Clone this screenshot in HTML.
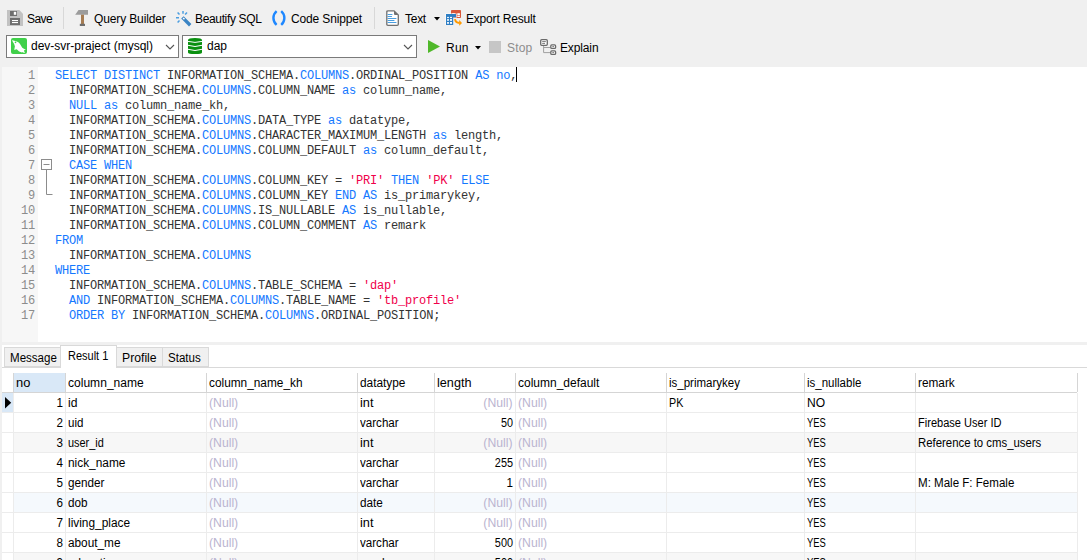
<!DOCTYPE html>
<html><head><meta charset="utf-8">
<style>
html,body{margin:0;padding:0}
body{width:1087px;height:560px;overflow:hidden;background:#f0f0f0;position:relative;font-family:"Liberation Sans",sans-serif;font-size:11.5px;color:#000}
.a{position:absolute}
.t{position:absolute;white-space:nowrap;line-height:16px;font-size:12px}
svg{position:absolute;overflow:visible}
.sep{position:absolute;width:1px;background:#d8d8d8}
.combo{position:absolute;border:1px solid #7a7a7a;background:#fff;box-sizing:border-box}
#ed{position:absolute;left:2px;top:67px;width:1085px;height:275px;background:#fff;overflow:hidden}
#gut{position:absolute;left:0;top:0;width:36px;height:275px;background:#f7f7f7}
.ln{position:absolute;right:0;width:1085px;font-family:"Liberation Mono",monospace;font-size:12px;letter-spacing:-0.2px;line-height:15px;white-space:pre;color:#333}
.num{position:absolute;left:0;width:33px;text-align:right;font-family:"Liberation Mono",monospace;font-size:12px;letter-spacing:-0.2px;line-height:15px;color:#8c8c8c}
.k{color:#1478ff}
.s{color:#f0004a}
#res{position:absolute;left:2px;top:345px;width:1085px;height:215px;background:#fff}
.tab{position:absolute;top:2px;height:20px;box-sizing:border-box;border:1px solid #d9d9d9;background:#f0f0f0}
.tab.act{top:0;height:23px;background:#fff;border-bottom:none}
.hl{position:absolute;height:1px;background:#ececec}
.vl{position:absolute;width:1px;background:#ececec}
.c{position:absolute;white-space:nowrap;line-height:16px;font-size:12px;transform-origin:left}
.n{color:#bab4d0}
.r{text-align:right}
</style></head><body>

<!-- toolbar row 1 -->
<svg style="left:7px;top:10px" width="16" height="16" viewBox="0 0 16 16">
  <path d="M0 0H12.3L16 3.8V16H0Z" fill="#c2c2c2"/>
  <rect x="3" y="1" width="7" height="5" fill="#6f6f6f"/>
  <rect x="6.8" y="1.8" width="2.4" height="3" fill="#fff"/>
  <rect x="3" y="8" width="10" height="7" fill="#6f6f6f"/>
  <rect x="5" y="10" width="6" height="1.1" fill="#fff"/>
  <rect x="5" y="12" width="6" height="1.1" fill="#fff"/>
</svg>
<div class="t" style="left:27px;top:11px;letter-spacing:-0.6px">Save</div>
<div class="sep" style="left:63px;top:7px;height:22px"></div>

<svg style="left:72px;top:10px" width="16" height="16" viewBox="0 0 16 16">
  <path d="M3.2 4.7L6.5 0H16V4.7Z" fill="#9c9c9c"/>
  <rect x="9" y="4.7" width="3" height="9.3" fill="#a67c52"/>
  <rect x="7.8" y="13.8" width="5.2" height="2.2" fill="#6f6f6f"/>
</svg>
<div class="t" style="left:94px;top:11px;letter-spacing:-0.13px">Query Builder</div>

<svg style="left:176px;top:10px" width="16" height="16" viewBox="0 0 16 16">
  <path d="M5.2 8.6L7.6 6.2L15.4 14L13 16.4Z" fill="#3a84c4"/>
  <path d="M6.6 8.4L7.6 7.4L9 8.8L8 9.8Z" fill="#fff"/>
  <path d="M7 1V3.8M0 7.8H3M1.6 2.5L3.5 4.6M11 2.5L9.1 4.6M1.6 12.6L3.5 10.6" stroke="#4c9ee0" stroke-width="1.5"/>
</svg>
<div class="t" style="left:195px;top:11px;letter-spacing:-0.35px">Beautify SQL</div>

<svg style="left:271px;top:10px" width="16" height="16" viewBox="0 0 16 16">
  <path d="M5.6 1.1A9.1 9.1 0 0 0 5.6 14.9" fill="none" stroke="#1e88ff" stroke-width="2.4"/>
  <path d="M10.2 1.1A9.1 9.1 0 0 1 10.2 14.9" fill="none" stroke="#1e88ff" stroke-width="2.4"/>
</svg>
<div class="t" style="left:291px;top:11px;letter-spacing:-0.14px">Code Snippet</div>
<div class="sep" style="left:374px;top:7px;height:22px"></div>

<svg style="left:385px;top:10px" width="16" height="16" viewBox="0 0 16 16">
  <path d="M2.4 0.8H9L13.3 5.1V14.2Q13.3 15.3 12.2 15.3H2.9Q1.8 15.3 1.8 14.2V1.9Q1.8 0.8 2.9 0.8Z" fill="#fff" stroke="#707070" stroke-width="1.3"/>
  <path d="M9 0.8V4Q9 5.1 10.1 5.1H13.3Z" fill="#707070"/>
  <path d="M3 4.5H7M3 6.5H6.5M3 8.5H11M3 10.5H9M3 12.5H11" stroke="#4a9ee0" stroke-width="1.1" stroke-linecap="round"/>
</svg>
<div class="t" style="left:405px;top:11px;letter-spacing:-0.27px">Text</div>
<svg style="left:434px;top:17px" width="6" height="4" viewBox="0 0 6 4"><path d="M0 0H6L3 3.5Z" fill="#000"/></svg>

<svg style="left:446px;top:10px" width="16" height="16" viewBox="0 0 16 16">
  <rect x="5" y="0" width="10" height="8" rx="0.8" fill="#d9573a"/>
  <rect x="6.2" y="3.2" width="2.6" height="2.2" fill="#fff"/>
  <rect x="11.3" y="3.2" width="2.6" height="2.2" fill="#fff"/>
  <rect x="11.3" y="6" width="2.6" height="1" fill="#fff"/>
  <path d="M-0.6 3.4H10.6V7.8H7.8V8.5H7.2V7.2H10V4H0V15H-0.6Z" fill="#fff"/>
  <path d="M0 4H10V7.2H7.2V15H0Z" fill="#2f7fc4"/>
  <rect x="1.1" y="6.9" width="1.8" height="1.2" fill="#fff"/>
  <rect x="4" y="6.9" width="2" height="1.2" fill="#fff"/>
  <rect x="1.1" y="9.1" width="1.8" height="1.7" fill="#fff"/>
  <rect x="4" y="9.1" width="2" height="1.7" fill="#fff"/>
  <rect x="1.1" y="12" width="1.8" height="1.8" fill="#fff"/>
  <rect x="4" y="12" width="2" height="1.8" fill="#fff"/>
  <path d="M9 9.2Q9.5 12.8 13.6 13" fill="none" stroke="#ff9a00" stroke-width="2"/>
  <path d="M13.2 10L16 13L13.2 15.8Z" fill="#ff9a00"/>
</svg>
<div class="t" style="left:466px;top:11px;letter-spacing:-0.19px">Export Result</div>

<!-- toolbar row 2 -->
<div class="combo" style="left:6px;top:35px;width:173px;height:23px"></div>
<svg style="left:11px;top:38px" width="16" height="16" viewBox="0 0 16 16">
  <rect x="0" y="0" width="16" height="16" rx="2" fill="#40d04a"/>
  <path d="M0.9 2.3C2.5 2.3 5.5 3.2 7.7 4.6C9 5.6 10 8 11.3 9.8C12.2 10.7 13.5 11.2 14.9 11.4L12.9 12.5L13.9 14.9C12.5 14.9 11 14.5 8.8 13.7C7.5 13 6.5 11.8 5.6 11.2L3.2 11.9L3.9 8.6C3.7 7.5 3.3 6 2.4 4.8Z" fill="#fff"/>
  <circle cx="4.5" cy="4.4" r="0.8" fill="#40d04a"/>
</svg>
<div class="t" style="left:31px;top:38px">dev-svr-praject (mysql)</div>
<svg style="left:166px;top:45px" width="8" height="5" viewBox="0 0 8 5"><path d="M0 0L4 4L8 0" fill="none" stroke="#555" stroke-width="1.1"/></svg>

<div class="combo" style="left:182px;top:35px;width:235px;height:23px"></div>
<svg style="left:188px;top:38px" width="14" height="16" viewBox="0 0 14 16">
  <path d="M0 2Q0 0 7 0Q14 0 14 2V14.5Q14 16 7 16Q0 16 0 14.5Z" fill="#0a9010"/>
  <path d="M0 3.4Q7 5.4 14 3.4M0 7.3Q7 9.7 14 7.3M0 11.3Q7 13.7 14 11.3" fill="none" stroke="#fff" stroke-width="1"/>
</svg>
<div class="t" style="left:207px;top:38px">dap</div>
<svg style="left:404px;top:45px" width="8" height="5" viewBox="0 0 8 5"><path d="M0 0L4 4L8 0" fill="none" stroke="#555" stroke-width="1.1"/></svg>

<svg style="left:428px;top:40px" width="12" height="13" viewBox="0 0 12 13"><path d="M0 0L12 6.5L0 13Z" fill="#4fb82a"/></svg>
<div class="t" style="left:446px;top:40px;letter-spacing:0.25px">Run</div>
<svg style="left:475px;top:46px" width="6" height="4" viewBox="0 0 6 4"><path d="M0 0H6L3 3.5Z" fill="#000"/></svg>
<div class="a" style="left:489px;top:41px;width:12px;height:12px;background:#c6c6c6"></div>
<div class="t" style="left:507px;top:40px;color:#8d8d8d;letter-spacing:0.2px">Stop</div>
<svg style="left:540px;top:39px" width="17" height="16" viewBox="0 0 17 16">
  <path d="M3.6 6.8V13.6H10.5M3.6 8.5H10.5" fill="none" stroke="#a0a0a0" stroke-width="1"/>
  <rect x="0.7" y="0.7" width="6.6" height="5.6" rx="1" fill="#fff" stroke="#6a6a6a" stroke-width="1.3"/>
  <path d="M2.2 2.6H5.8M2.2 4.4H5" stroke="#6a6a6a" stroke-width="0.9"/>
  <rect x="10.8" y="5.9" width="4.8" height="3.5" rx="1" fill="#fff" stroke="#6a6a6a" stroke-width="1.3"/>
  <rect x="10.8" y="11.9" width="4.8" height="3.5" rx="1" fill="#fff" stroke="#6a6a6a" stroke-width="1.3"/>
  <path d="M12.3 7.6H14.1M12.3 13.6H14.1" stroke="#6a6a6a" stroke-width="0.9"/>
</svg>
<div class="t" style="left:560px;top:40px;letter-spacing:-0.13px">Explain</div>

<!-- editor -->
<div id="ed">
  <div id="gut"></div>
  <div class="num" style="top:2px">1</div>
  <div class="ln" style="left:53px;top:2px"><span class="k">SELECT</span> <span class="k">DISTINCT</span> INFORMATION_SCHEMA.<span class="k">COLUMNS</span>.ORDINAL_POSITION <span class="k">AS</span> <span class="k">no</span>,</div>
  <div class="num" style="top:17px">2</div>
  <div class="ln" style="left:53px;top:17px">  INFORMATION_SCHEMA.<span class="k">COLUMNS</span>.COLUMN_NAME <span class="k">as</span> column_name,</div>
  <div class="num" style="top:32px">3</div>
  <div class="ln" style="left:53px;top:32px">  <span class="k">NULL</span> <span class="k">as</span> column_name_kh,</div>
  <div class="num" style="top:47px">4</div>
  <div class="ln" style="left:53px;top:47px">  INFORMATION_SCHEMA.<span class="k">COLUMNS</span>.DATA_TYPE <span class="k">as</span> datatype,</div>
  <div class="num" style="top:62px">5</div>
  <div class="ln" style="left:53px;top:62px">  INFORMATION_SCHEMA.<span class="k">COLUMNS</span>.CHARACTER_MAXIMUM_LENGTH <span class="k">as</span> length,</div>
  <div class="num" style="top:77px">6</div>
  <div class="ln" style="left:53px;top:77px">  INFORMATION_SCHEMA.<span class="k">COLUMNS</span>.COLUMN_DEFAULT <span class="k">as</span> column_default,</div>
  <div class="num" style="top:92px">7</div>
  <div class="ln" style="left:53px;top:92px">  <span class="k">CASE</span> <span class="k">WHEN</span></div>
  <div class="num" style="top:107px">8</div>
  <div class="ln" style="left:53px;top:107px">  INFORMATION_SCHEMA.<span class="k">COLUMNS</span>.COLUMN_KEY = <span class="s">&#x27;PRI&#x27;</span> <span class="k">THEN</span> <span class="s">&#x27;PK&#x27;</span> <span class="k">ELSE</span></div>
  <div class="num" style="top:122px">9</div>
  <div class="ln" style="left:53px;top:122px">  INFORMATION_SCHEMA.<span class="k">COLUMNS</span>.COLUMN_KEY <span class="k">END</span> <span class="k">AS</span> is_primarykey,</div>
  <div class="num" style="top:137px">10</div>
  <div class="ln" style="left:53px;top:137px">  INFORMATION_SCHEMA.<span class="k">COLUMNS</span>.IS_NULLABLE <span class="k">AS</span> is_nullable,</div>
  <div class="num" style="top:152px">11</div>
  <div class="ln" style="left:53px;top:152px">  INFORMATION_SCHEMA.<span class="k">COLUMNS</span>.COLUMN_COMMENT <span class="k">AS</span> remark</div>
  <div class="num" style="top:167px">12</div>
  <div class="ln" style="left:53px;top:167px"><span class="k">FROM</span></div>
  <div class="num" style="top:182px">13</div>
  <div class="ln" style="left:53px;top:182px">  INFORMATION_SCHEMA.<span class="k">COLUMNS</span></div>
  <div class="num" style="top:197px">14</div>
  <div class="ln" style="left:53px;top:197px"><span class="k">WHERE</span></div>
  <div class="num" style="top:212px">15</div>
  <div class="ln" style="left:53px;top:212px">  INFORMATION_SCHEMA.<span class="k">COLUMNS</span>.TABLE_SCHEMA = <span class="s">&#x27;dap&#x27;</span></div>
  <div class="num" style="top:227px">16</div>
  <div class="ln" style="left:53px;top:227px">  <span class="k">AND</span> INFORMATION_SCHEMA.<span class="k">COLUMNS</span>.TABLE_NAME = <span class="s">&#x27;tb_profile&#x27;</span></div>
  <div class="num" style="top:242px">17</div>
  <div class="ln" style="left:53px;top:242px">  <span class="k">ORDER</span> <span class="k">BY</span> INFORMATION_SCHEMA.<span class="k">COLUMNS</span>.ORDINAL_POSITION;</div>
  <svg style="left:39px;top:92px" width="12" height="36" viewBox="0 0 12 36"><rect x="0.5" y="0.5" width="10" height="10" fill="#fff" stroke="#8c8c8c"/><path d="M2.5 5.5H8.5" stroke="#8c8c8c"/><path d="M5.5 11V35.5H11.5" fill="none" stroke="#8c8c8c"/></svg>
  <div class="a" style="left:514px;top:0px;width:1px;height:15px;background:#000"></div>
</div>

<!-- results -->
<div id="res">
  <div class="hl" style="left:0;top:22px;width:1085px;background:#d9d9d9"></div>
  <div class="tab" style="left:2px;width:57px"></div>
  <div class="c" style="left:8px;top:5px;transform:scaleX(0.963)">Message</div>
  <div class="tab" style="left:114px;width:47px"></div>
  <div class="c" style="left:120px;top:5px;transform:scaleX(1.018)">Profile</div>
  <div class="tab" style="left:160px;width:47px"></div>
  <div class="c" style="left:166px;top:5px;transform:scaleX(0.964)">Status</div>
  <div class="tab act" style="left:58px;width:57px"></div>
  <div class="c" style="left:66px;top:3px;transform:scaleX(0.916)">Result 1</div>
  <div class="a" style="left:12px;top:28px;width:51px;height:19px;background:#d9e8f7"></div>
  <div class="a" style="left:12px;top:88px;width:1063px;height:19px;background:#f7f7f7"></div>
  <div class="a" style="left:12px;top:148px;width:1063px;height:19px;background:#f5f9fd"></div>
  <div class="a" style="left:12px;top:208px;width:1063px;height:19px;background:#f7f7f7"></div>
  <div class="hl" style="left:0px;top:47px;width:1075px;background:#d5d5d5"></div>
  <div class="hl" style="left:0px;top:67px;width:1075px"></div>
  <div class="hl" style="left:0px;top:87px;width:1075px"></div>
  <div class="hl" style="left:0px;top:107px;width:1075px"></div>
  <div class="hl" style="left:0px;top:127px;width:1075px"></div>
  <div class="hl" style="left:0px;top:147px;width:1075px"></div>
  <div class="hl" style="left:0px;top:167px;width:1075px"></div>
  <div class="hl" style="left:0px;top:187px;width:1075px"></div>
  <div class="hl" style="left:0px;top:207px;width:1075px"></div>
  <div class="hl" style="left:0px;top:227px;width:1075px"></div>
  <div class="vl" style="left:11px;top:28px;height:19px;background:#d5d5d5"></div>
  <div class="vl" style="left:11px;top:48px;height:168px"></div>
  <div class="vl" style="left:63px;top:28px;height:19px;background:#d5d5d5"></div>
  <div class="vl" style="left:63px;top:48px;height:168px"></div>
  <div class="vl" style="left:204px;top:28px;height:19px;background:#d5d5d5"></div>
  <div class="vl" style="left:204px;top:48px;height:168px"></div>
  <div class="vl" style="left:355px;top:28px;height:19px;background:#d5d5d5"></div>
  <div class="vl" style="left:355px;top:48px;height:168px"></div>
  <div class="vl" style="left:432px;top:28px;height:19px;background:#d5d5d5"></div>
  <div class="vl" style="left:432px;top:48px;height:168px"></div>
  <div class="vl" style="left:513px;top:28px;height:19px;background:#d5d5d5"></div>
  <div class="vl" style="left:513px;top:48px;height:168px"></div>
  <div class="vl" style="left:664px;top:28px;height:19px;background:#d5d5d5"></div>
  <div class="vl" style="left:664px;top:48px;height:168px"></div>
  <div class="vl" style="left:802px;top:28px;height:19px;background:#d5d5d5"></div>
  <div class="vl" style="left:802px;top:48px;height:168px"></div>
  <div class="vl" style="left:913px;top:28px;height:19px;background:#d5d5d5"></div>
  <div class="vl" style="left:913px;top:48px;height:168px"></div>
  <div class="vl" style="left:1075px;top:28px;height:19px;background:#d5d5d5"></div>
  <div class="vl" style="left:1075px;top:48px;height:168px"></div>
  <div class="c" style="left:14px;top:30px;transform:scaleX(1.075)">no</div>
  <div class="c" style="left:66px;top:30px;transform:scaleX(1.005)">column_name</div>
  <div class="c" style="left:207px;top:30px;transform:scaleX(0.987)">column_name_kh</div>
  <div class="c" style="left:358px;top:30px;transform:scaleX(0.987)">datatype</div>
  <div class="c" style="left:435px;top:30px;transform:scaleX(1.055)">length</div>
  <div class="c" style="left:516px;top:30px;transform:scaleX(0.999)">column_default</div>
  <div class="c" style="left:667px;top:30px;transform:scaleX(0.959)">is_primarykey</div>
  <div class="c" style="left:805px;top:30px;transform:scaleX(0.958)">is_nullable</div>
  <div class="c" style="left:916px;top:30px;transform:scaleX(0.984)">remark</div>
  <div class="a" style="left:0px;top:48px;width:11px;height:19px;background:#d9e8f7"></div>
  <svg style="left:3px;top:52px" width="7" height="12" viewBox="0 0 7 12"><path d="M0 0L6.2 5.8L0 11.6Z" fill="#000"/></svg>
  <div class="c r" style="left:11px;width:50px;top:50px;transform-origin:right;transform:scaleX(0.970)">1</div>
  <div class="c" style="left:66px;top:50px;transform:scaleX(1.011)">id</div>
  <div class="c n" style="left:207px;top:50px;transform:scaleX(1.018)">(Null)</div>
  <div class="c" style="left:358px;top:50px;transform:scaleX(1.062)">int</div>
  <div class="c n r" style="left:432px;width:78.5px;top:50px;transform-origin:right;transform:scaleX(1.018)">(Null)</div>
  <div class="c n" style="left:516px;top:50px;transform:scaleX(1.018)">(Null)</div>
  <div class="c" style="left:667px;top:50px;transform:scaleX(0.893)">PK</div>
  <div class="c" style="left:805px;top:50px;transform:scaleX(1.006)">NO</div>
  <div class="c r" style="left:11px;width:50px;top:70px;transform-origin:right;transform:scaleX(0.970)">2</div>
  <div class="c" style="left:66px;top:70px;transform:scaleX(0.963)">uid</div>
  <div class="c n" style="left:207px;top:70px;transform:scaleX(1.018)">(Null)</div>
  <div class="c" style="left:358px;top:70px;transform:scaleX(0.965)">varchar</div>
  <div class="c r" style="left:432px;width:79px;top:70px;transform-origin:right;transform:scaleX(0.900)">50</div>
  <div class="c n" style="left:516px;top:70px;transform:scaleX(1.018)">(Null)</div>
  <div class="c" style="left:805px;top:70px;transform:scaleX(0.783)">YES</div>
  <div class="c" style="left:916px;top:70px;transform:scaleX(0.921)">Firebase User ID</div>
  <div class="c r" style="left:11px;width:50px;top:90px;transform-origin:right;transform:scaleX(0.970)">3</div>
  <div class="c" style="left:66px;top:90px;transform:scaleX(0.910)">user_id</div>
  <div class="c n" style="left:207px;top:90px;transform:scaleX(1.018)">(Null)</div>
  <div class="c" style="left:358px;top:90px;transform:scaleX(1.062)">int</div>
  <div class="c n r" style="left:432px;width:78.5px;top:90px;transform-origin:right;transform:scaleX(1.018)">(Null)</div>
  <div class="c n" style="left:516px;top:90px;transform:scaleX(1.018)">(Null)</div>
  <div class="c" style="left:805px;top:90px;transform:scaleX(0.783)">YES</div>
  <div class="c" style="left:916px;top:90px;transform:scaleX(0.948)">Reference to cms_users</div>
  <div class="c r" style="left:11px;width:50px;top:110px;transform-origin:right;transform:scaleX(0.970)">4</div>
  <div class="c" style="left:66px;top:110px;transform:scaleX(0.989)">nick_name</div>
  <div class="c n" style="left:207px;top:110px;transform:scaleX(1.018)">(Null)</div>
  <div class="c" style="left:358px;top:110px;transform:scaleX(0.965)">varchar</div>
  <div class="c r" style="left:432px;width:79px;top:110px;transform-origin:right;transform:scaleX(0.905)">255</div>
  <div class="c n" style="left:516px;top:110px;transform:scaleX(1.018)">(Null)</div>
  <div class="c" style="left:805px;top:110px;transform:scaleX(0.783)">YES</div>
  <div class="c r" style="left:11px;width:50px;top:130px;transform-origin:right;transform:scaleX(0.970)">5</div>
  <div class="c" style="left:66px;top:130px;transform:scaleX(0.976)">gender</div>
  <div class="c n" style="left:207px;top:130px;transform:scaleX(1.018)">(Null)</div>
  <div class="c" style="left:358px;top:130px;transform:scaleX(0.965)">varchar</div>
  <div class="c r" style="left:432px;width:79px;top:130px;transform-origin:right;transform:scaleX(0.970)">1</div>
  <div class="c n" style="left:516px;top:130px;transform:scaleX(1.018)">(Null)</div>
  <div class="c" style="left:805px;top:130px;transform:scaleX(0.783)">YES</div>
  <div class="c" style="left:916px;top:130px;transform:scaleX(0.963)">M: Male F: Female</div>
  <div class="c r" style="left:11px;width:50px;top:150px;transform-origin:right;transform:scaleX(0.970)">6</div>
  <div class="c" style="left:66px;top:150px;transform:scaleX(0.975)">dob</div>
  <div class="c n" style="left:207px;top:150px;transform:scaleX(1.018)">(Null)</div>
  <div class="c" style="left:358px;top:150px;transform:scaleX(0.978)">date</div>
  <div class="c n r" style="left:432px;width:78.5px;top:150px;transform-origin:right;transform:scaleX(1.018)">(Null)</div>
  <div class="c n" style="left:516px;top:150px;transform:scaleX(1.018)">(Null)</div>
  <div class="c" style="left:805px;top:150px;transform:scaleX(0.783)">YES</div>
  <div class="c r" style="left:11px;width:50px;top:170px;transform-origin:right;transform:scaleX(0.970)">7</div>
  <div class="c" style="left:66px;top:170px;transform:scaleX(0.990)">living_place</div>
  <div class="c n" style="left:207px;top:170px;transform:scaleX(1.018)">(Null)</div>
  <div class="c" style="left:358px;top:170px;transform:scaleX(1.062)">int</div>
  <div class="c n r" style="left:432px;width:78.5px;top:170px;transform-origin:right;transform:scaleX(1.018)">(Null)</div>
  <div class="c n" style="left:516px;top:170px;transform:scaleX(1.018)">(Null)</div>
  <div class="c" style="left:805px;top:170px;transform:scaleX(0.783)">YES</div>
  <div class="c r" style="left:11px;width:50px;top:190px;transform-origin:right;transform:scaleX(0.970)">8</div>
  <div class="c" style="left:66px;top:190px;transform:scaleX(0.983)">about_me</div>
  <div class="c n" style="left:207px;top:190px;transform:scaleX(1.018)">(Null)</div>
  <div class="c" style="left:358px;top:190px;transform:scaleX(0.965)">varchar</div>
  <div class="c r" style="left:432px;width:79px;top:190px;transform-origin:right;transform:scaleX(0.905)">500</div>
  <div class="c n" style="left:516px;top:190px;transform:scaleX(1.018)">(Null)</div>
  <div class="c" style="left:805px;top:190px;transform:scaleX(0.783)">YES</div>
  <div class="c r" style="left:11px;width:50px;top:210px;transform-origin:right;transform:scaleX(0.970)">9</div>
  <div class="c" style="left:66px;top:210px;transform:scaleX(0.970)">education</div>
  <div class="c n" style="left:207px;top:210px;transform:scaleX(1.018)">(Null)</div>
  <div class="c" style="left:358px;top:210px;transform:scaleX(0.965)">varchar</div>
  <div class="c r" style="left:432px;width:79px;top:210px;transform-origin:right;transform:scaleX(0.905)">500</div>
  <div class="c n" style="left:516px;top:210px;transform:scaleX(1.018)">(Null)</div>
  <div class="c" style="left:805px;top:210px;transform:scaleX(0.783)">YES</div>
</div>
</body></html>
